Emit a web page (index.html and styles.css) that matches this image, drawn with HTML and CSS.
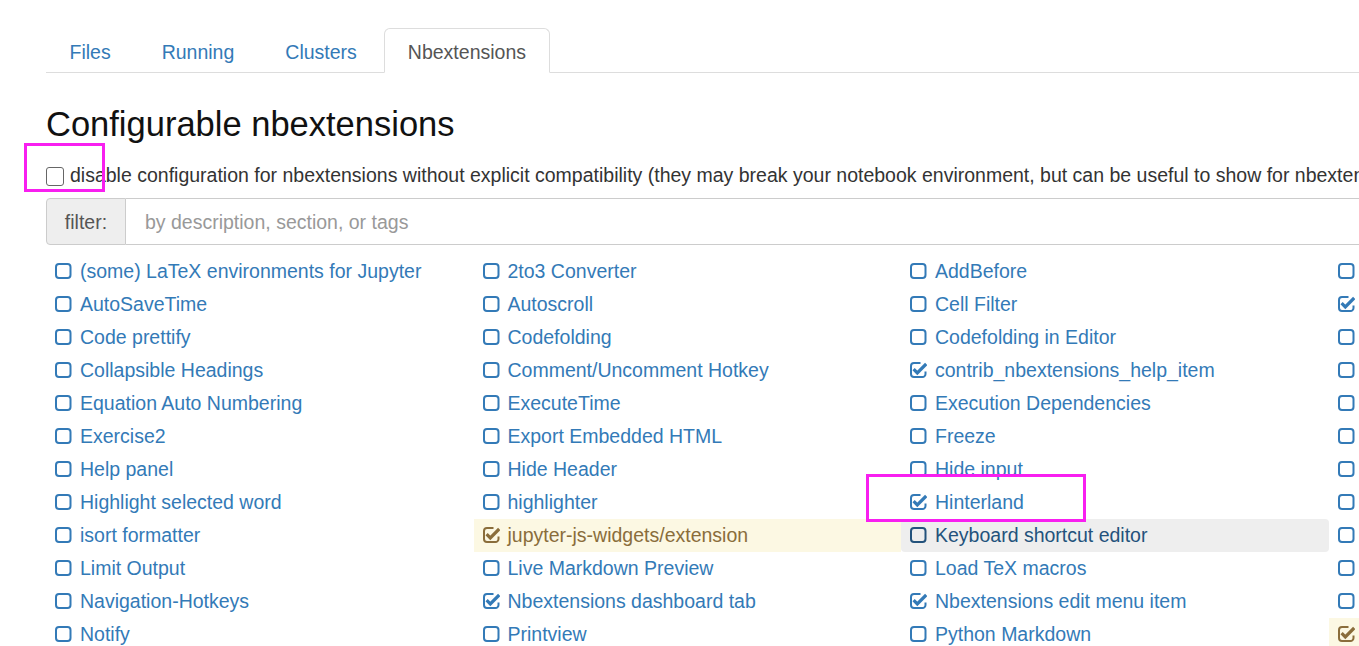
FILE: index.html
```html
<!DOCTYPE html>
<html lang="en">
<head>
<meta charset="utf-8">
<title>Nbextensions</title>
<link rel="stylesheet" href="styles.css">
</head>
<body>
<div class="page">
  <ul class="tabs">
    <li><a class="tab">Files</a></li>
    <li><a class="tab">Running</a></li>
    <li><a class="tab">Clusters</a></li>
    <li><a class="tab active">Nbextensions</a></li>
  </ul>

  <h3 class="title">Configurable nbextensions</h3>

  <label class="compat">
    <input type="checkbox" class="cb">
    <span>disable configuration for nbextensions without explicit compatibility (they may break your notebook environment, but can be useful to show for nbextension development)</span>
  </label>

  <div class="filter">
    <span class="filter-label">filter:</span>
    <input class="filter-input" type="text" placeholder="by description, section, or tags">
  </div>

  <ul class="ext-list" id="list"></ul>

  <div class="mark mark-1"></div>
  <div class="mark mark-2"></div>
</div>
<script src="app.js"></script>
</body>
</html>
```

FILE: app.js
```js
var items = [
  ["(some) LaTeX environments for Jupyter",0],["2to3 Converter",0],["AddBefore",0],["Autopep8",0],
  ["AutoSaveTime",0],["Autoscroll",0],["Cell Filter",0],["Code Font Size",1],
  ["Code prettify",0],["Codefolding",0],["Codefolding in Editor",0],["CodeMirror mode extensions",0],
  ["Collapsible Headings",0],["Comment/Uncomment Hotkey",0],["contrib_nbextensions_help_item",1],["datestamper",0],
  ["Equation Auto Numbering",0],["ExecuteTime",0],["Execution Dependencies",0],["Exercise",0],
  ["Exercise2",0],["Export Embedded HTML",0],["Freeze",0],["Gist-it",0],
  ["Help panel",0],["Hide Header",0],["Hide input",0],["Hide input all",0],
  ["Highlight selected word",0],["highlighter",0],["Hinterland",1],["Initialization cells",0],
  ["isort formatter",0],["jupyter-js-widgets/extension",1,"warn"],["Keyboard shortcut editor",0,"hover"],["Launch QTConsole",0],
  ["Limit Output",0],["Live Markdown Preview",0],["Load TeX macros",0],["Move selected cells",0],
  ["Navigation-Hotkeys",0],["Nbextensions dashboard tab",1],["Nbextensions edit menu item",1],["nbTranslate",0],
  ["Notify",0],["Printview",0],["Python Markdown",0],["Ruler",1,"warn"]
];
var box = '<svg class="ico" viewBox="0 0 17 16" aria-hidden="true"><rect x="1" y="1" width="14.5" height="14" rx="3" fill="none" stroke="currentColor" stroke-width="2"/></svg>';
var chk = '<svg class="ico" viewBox="0 0 17 16" aria-hidden="true"><path d="M10.5 1H4a3 3 0 0 0-3 3v8a3 3 0 0 0 3 3h8.5a3 3 0 0 0 3-3V9.5" fill="none" stroke="currentColor" stroke-width="2"/><path d="M3.6 7.2l3.7 3.7L16.2 2" fill="none" stroke="currentColor" stroke-width="3.2"/></svg>';
var html = "";
items.forEach(function (it) {
  var cls = "ext" + (it[2] ? " " + it[2] : "");
  html += '<li class="' + cls + '"><a>' + (it[1] ? chk : box) + '<span>' + it[0].replace(/&/g,"&amp;").replace(/</g,"&lt;") + '</span></a></li>';
});
document.getElementById("list").innerHTML = html;
```

FILE: styles.css
```css
html, body {
  margin: 0;
  padding: 0;
  overflow: hidden;
  background: #fff;
}
body {
  font-family: "Liberation Sans", Arial, sans-serif;
  font-size: 19.5px;
  color: #333;
}
.page {
  position: relative;
  width: 1710px;
  padding: 28px 0 0 46px;
}
.tabs {
  list-style: none;
  margin: 0;
  padding: 0;
  display: flex;
  border-bottom: 1px solid #ddd;
}
.tabs li {
  margin-right: 4px;
  margin-bottom: -1px;
}
.tab {
  display: block;
  padding: 9px 22.5px 6px;
  line-height: 28px;
  border: 1px solid transparent;
  border-radius: 6px 6px 0 0;
  color: #337ab7;
}
.tab.active {
  color: #555;
  background: #fff;
  border-color: #ddd #ddd transparent;
}
.title {
  margin: 32px 0 0;
  font-size: 34.5px;
  line-height: 38px;
  font-weight: normal;
  color: #111;
}
.compat {
  display: flex;
  align-items: center;
  gap: 6px;
  margin-top: 18px;
  line-height: 28px;
  white-space: nowrap;
}
.cb {
  appearance: none;
  -webkit-appearance: none;
  margin: 2px 0 0;
  width: 18px;
  height: 19px;
  border: 1px solid #666;
  border-radius: 3px;
  background: #fff;
  flex: none;
}
.filter {
  display: flex;
  margin-top: 9px;
  height: 47px;
}
.filter-label {
  width: 78px;
  flex: none;
  display: flex;
  align-items: center;
  justify-content: center;
  padding-top: 1px;
  background: #eee;
  border: 1px solid #ccc;
  border-radius: 4px 0 0 4px;
  color: #555;
}
.filter-input {
  flex: 1;
  border: 1px solid #ccc;
  border-left: 0;
  border-radius: 0 4px 4px 0;
  padding: 1px 18px 0 19px;
  font: inherit;
  color: #555;
  outline: none;
}
.filter-input::placeholder {
  color: #999;
}
.ext-list {
  list-style: none;
  margin: 10px 0 0;
  padding: 0;
  display: grid;
  grid-template-columns: repeat(4, 427.5px);
}
.ext a {
  display: flex;
  align-items: center;
  height: 33px;
  padding-left: 9px;
  border-radius: 4px;
  color: #337ab7;
  white-space: nowrap;
}
.ico {
  width: 17px;
  height: 16px;
  flex: none;
  margin-right: 8px;
  margin-top: -2px;
}
.ext.warn a {
  background: #fcf8e3;
  color: #8a6d3b;
  border-radius: 0;
}
.ext.hover a {
  background: #eee;
  color: #23527c;
}
.mark {
  position: absolute;
  border: 3px solid #f81ff0;
  box-sizing: border-box;
}
.mark-1 {
  left: 24px;
  top: 143px;
  width: 81px;
  height: 49px;
}
.mark-2 {
  left: 866px;
  top: 474px;
  width: 220px;
  height: 48px;
}
```
